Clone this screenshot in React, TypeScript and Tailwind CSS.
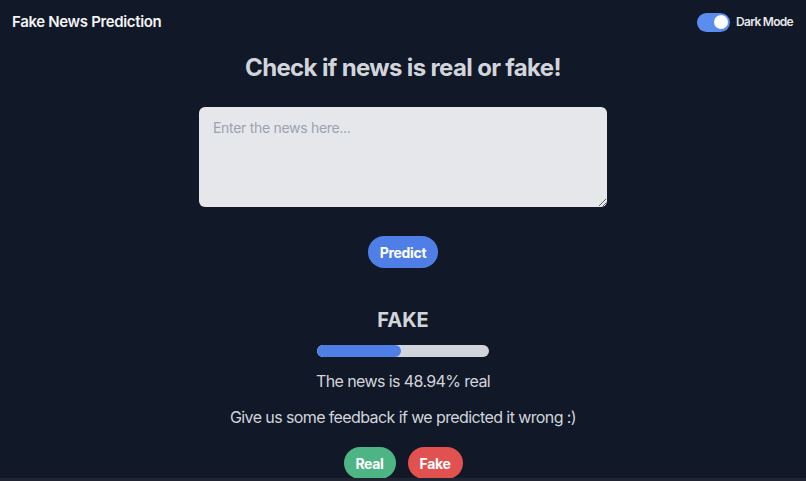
import React, { useState } from "react";

const App = () => {
  const [dark, setDark] = useState(true);
  const realPct = 48.94;

  return (
    <div
      className="h-[481px] w-full flex flex-col bg-[#111827] text-[#d1d5db] overflow-hidden"
      style={{ fontFamily: "Inter, 'Noto Sans', sans-serif" }}
    >
      <div className="flex-1 overflow-hidden">
        <header className="flex items-center justify-between h-[44px] pl-[12px] pr-[13px]">
          <h1 className="text-[15px] font-semibold tracking-[-0.35px] text-[#f3f4f6]">
            Fake News Prediction
          </h1>
          <label className="flex items-center gap-[6px] cursor-pointer">
            <button
              onClick={() => setDark(!dark)}
              className={`w-[33px] h-[19px] rounded-full flex items-center px-[2px] ${
                dark ? "bg-[#5b8def] justify-end" : "bg-gray-400 justify-start"
              }`}
            >
              <span className="w-[14px] h-[14px] rounded-full bg-white" />
            </button>
            <span className="text-[12px] font-semibold tracking-[-0.7px] text-[#e5e7eb]">
              Dark Mode
            </span>
          </label>
        </header>

        <main className="flex flex-col items-center">
          <h2 className="mt-[9px] text-[24px] font-bold tracking-[-0.65px] text-[#d1d5db] leading-[30px]">
            Check if news is real or fake!
          </h2>

          <textarea
            placeholder="Enter the news here..."
            className="mt-[24px] w-[408px] h-[100px] rounded-[6px] bg-[#e5e7eb] px-[14px] py-[10px] text-[14px] tracking-[-0.3px] text-gray-800 placeholder:text-[#9ca3af] outline-none"
          />

          <button className="mt-[29px] w-[70px] h-[32px] rounded-full bg-[#4f7fe6] text-white text-[14px] font-bold tracking-[-0.3px]">
            Predict
          </button>

          <div className="mt-[40px] text-[20px] font-bold leading-[24px] text-[#d1d5db]">FAKE</div>

          <div className="mt-[13px] w-[172px] h-[12px] rounded-full bg-[#d1d5db] overflow-hidden">
            <div className="h-full rounded-full bg-[#4f7fe6]" style={{ width: `${realPct}%` }} />
          </div>

          <p className="mt-[14px] text-[16px] leading-[20px] tracking-[-0.6px]">
            The news is {realPct}% real
          </p>

          <p className="mt-[16px] text-[16px] leading-[20px] tracking-[-0.6px]">
            Give us some feedback if we predicted it wrong :)
          </p>

          <div className="mt-[20px] flex gap-[12px]">
            <button className="w-[52px] h-[32px] rounded-full bg-[#4db583] text-white text-[14px] font-bold tracking-[-0.3px]">
              Real
            </button>
            <button className="w-[55px] h-[32px] rounded-full bg-[#e0514f] text-white text-[14px] font-bold tracking-[-0.3px]">
              Fake
            </button>
          </div>
        </main>
      </div>
      <div className="h-[3px] bg-[#1f2430]" />
    </div>
  );
};

export default App;
